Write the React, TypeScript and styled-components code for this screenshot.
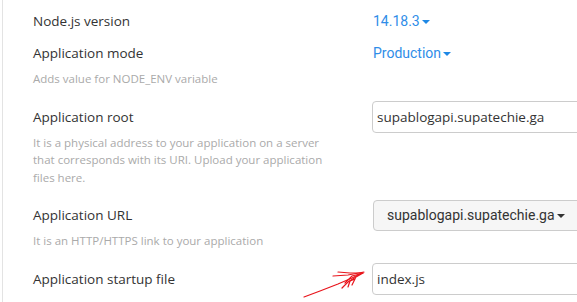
import styled, { createGlobalStyle } from "styled-components";

const GlobalStyle = createGlobalStyle`
  html, body {
    margin: 0;
    padding: 0;
    background: #ffffff;
  }
  body {
    font-family: "Open Sans", "Liberation Sans", sans-serif;
    color: #333333;
  }
`;

const Page = styled.div`
  position: relative;
  width: 577px;
  height: 302px;
  overflow: hidden;
  background: #ffffff;
`;

const Panel = styled.div`
  margin-left: 2px;
  border-left: 1px solid #e3e3e3;
  padding: 5px 0 0 30px;
  height: 100%;
  box-sizing: border-box;
`;

const Row = styled.div`
  display: grid;
  grid-template-columns: 340px 1fr;
  grid-template-areas:
    "label control"
    "hint hint";
`;

const Label = styled.div`
  grid-area: label;
  height: 32px;
  display: flex;
  align-items: center;
  font-size: 13.5px;
  color: #333333;
`;

const Control = styled.div`
  grid-area: control;
  height: 32px;
  display: flex;
  align-items: center;
  min-width: 0;
`;

const Hint = styled.div`
  grid-area: hint;
  max-width: 300px;
  margin: 1px 0 13px;
  font-size: 11.5px;
  line-height: 17.5px;
  color: #aaaaaa;
`;

const ValueLink = styled.span`
  display: inline-flex;
  align-items: center;
  font-family: Roboto, "Liberation Sans", sans-serif;
  font-size: 14px;
  color: #2f8de8;
  cursor: pointer;
`;

const Caret = styled.span<{ $color?: string }>`
  display: inline-block;
  width: 0;
  height: 0;
  margin-left: 2px;
  margin-top: 2px;
  border-left: 4px solid transparent;
  border-right: 4px solid transparent;
  border-top: 4px solid ${(p) => p.$color ?? "#1e88e5"};
`;

const TextInput = styled.input`
  box-sizing: border-box;
  width: 240px;
  height: 32px;
  margin-left: -1px;
  padding: 0 4px;
  border: 1px solid #cccccc;
  border-radius: 4px;
  font-family: "Open Sans", "Liberation Sans", sans-serif;
  font-size: 13.5px;
  color: #333333;
  background: #ffffff;
  outline: none;
  flex-shrink: 0;
`;

const SelectButton = styled.button`
  box-sizing: border-box;
  display: flex;
  align-items: center;
  width: 240px;
  height: 31px;
  padding: 0 0 0 13px;
  border: 1px solid #cccccc;
  border-radius: 4px;
  background: #f6f6f6;
  font-family: Roboto, "Liberation Sans", sans-serif;
  font-size: 14px;
  color: #333333;
  flex-shrink: 0;
  cursor: pointer;
`;

const Annotation = styled.svg`
  position: absolute;
  left: 0;
  top: 0;
  pointer-events: none;
`;

const App = () => {
  return (
    <Page>
      <GlobalStyle />
      <Panel>
        <Row>
          <Label>Node.js version</Label>
          <Control>
            <ValueLink>
              14.18.3
              <Caret />
            </ValueLink>
          </Control>
        </Row>
        <Row>
          <Label>Application mode</Label>
          <Control>
            <ValueLink>
              Production
              <Caret />
            </ValueLink>
          </Control>
          <Hint>Adds value for NODE_ENV variable</Hint>
        </Row>
        <Row>
          <Label>Application root</Label>
          <Control>
            <TextInput defaultValue="supablogapi.supatechie.ga" />
          </Control>
          <Hint>
            It is a physical address to your application on a server that
            corresponds with its URI. Upload your application files here.
          </Hint>
        </Row>
        <Row>
          <Label>Application URL</Label>
          <Control>
            <SelectButton type="button">
              supablogapi.supatechie.ga
              <Caret $color="#333333" />
            </SelectButton>
          </Control>
          <Hint>It is an HTTP/HTTPS link to your application</Hint>
        </Row>
        <Row>
          <Label>Application startup file</Label>
          <Control>
            <TextInput defaultValue="index.js" />
          </Control>
        </Row>
      </Panel>
      <Annotation width="577" height="302" viewBox="0 0 577 302">
        <g stroke="#e8141b" strokeWidth="1.2" fill="none" strokeLinecap="round">
          <polyline points="304,297 320,291 338,284 352,278 362,273" />
          <polyline points="338,272 350,273 363,273" />
          <polyline points="333,276 348,275 364,272" />
          <polyline points="342,288 348,282 356,277 363,273" />
          <polyline points="348,287 350,281 355,279 352,285" />
          <polyline points="345,283 352,276 360,274" />
        </g>
      </Annotation>
    </Page>
  );
};

export default App;
